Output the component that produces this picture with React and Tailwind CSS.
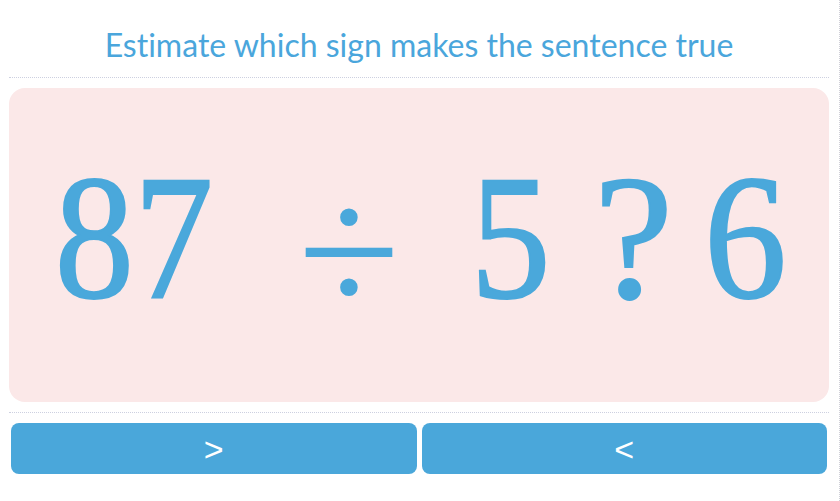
import React from 'react';

const App = () => {
  return (
    <div className="w-[840px] h-[501px] bg-white border-r border-dotted border-[#d0d0d8] pl-[9px] pr-[10px] flex flex-col">
      <div className="h-[78px] flex items-center justify-center pt-[12px] border-b border-dotted border-[#cdd0e0]">
        <h1 className="text-[32px] text-[#4aa6dc] font-['Lato',sans-serif] leading-none [font-variant-ligatures:none]">
          Estimate which sign makes the sentence true
        </h1>
      </div>

      <div className="mt-[10px] h-[314px] rounded-[16px] bg-[#fbe8e8] flex items-center pb-[16px] text-[#4aa8db] [font-family:'Liberation_Serif',serif] text-[178px] leading-none [-webkit-text-stroke:2px_#4aa8db]">
        <span className="ml-[36px] scale-x-[0.89]">87</span>
        <span className="ml-[75px] text-[186px] translate-y-[14px] [-webkit-text-stroke:0px]">÷</span>
        <span className="ml-[66px] scale-x-[0.9]">5</span>
        <span className="ml-[39px]">?</span>
        <span className="ml-[28px] scale-x-[0.93]">6</span>
      </div>

      <div className="mt-[10px] border-t border-dotted border-[#cdd0e0] pt-[10px] px-[2px] flex gap-[5px]">
        <button className="flex-1 h-[51px] rounded-[8px] bg-[#4aa7da] text-white text-[34px] font-['Liberation_Sans',sans-serif] leading-none">
          &gt;
        </button>
        <button className="flex-1 h-[51px] rounded-[8px] bg-[#4aa7da] text-white text-[34px] font-['Liberation_Sans',sans-serif] leading-none">
          &lt;
        </button>
      </div>
    </div>
  );
};

export default App;
